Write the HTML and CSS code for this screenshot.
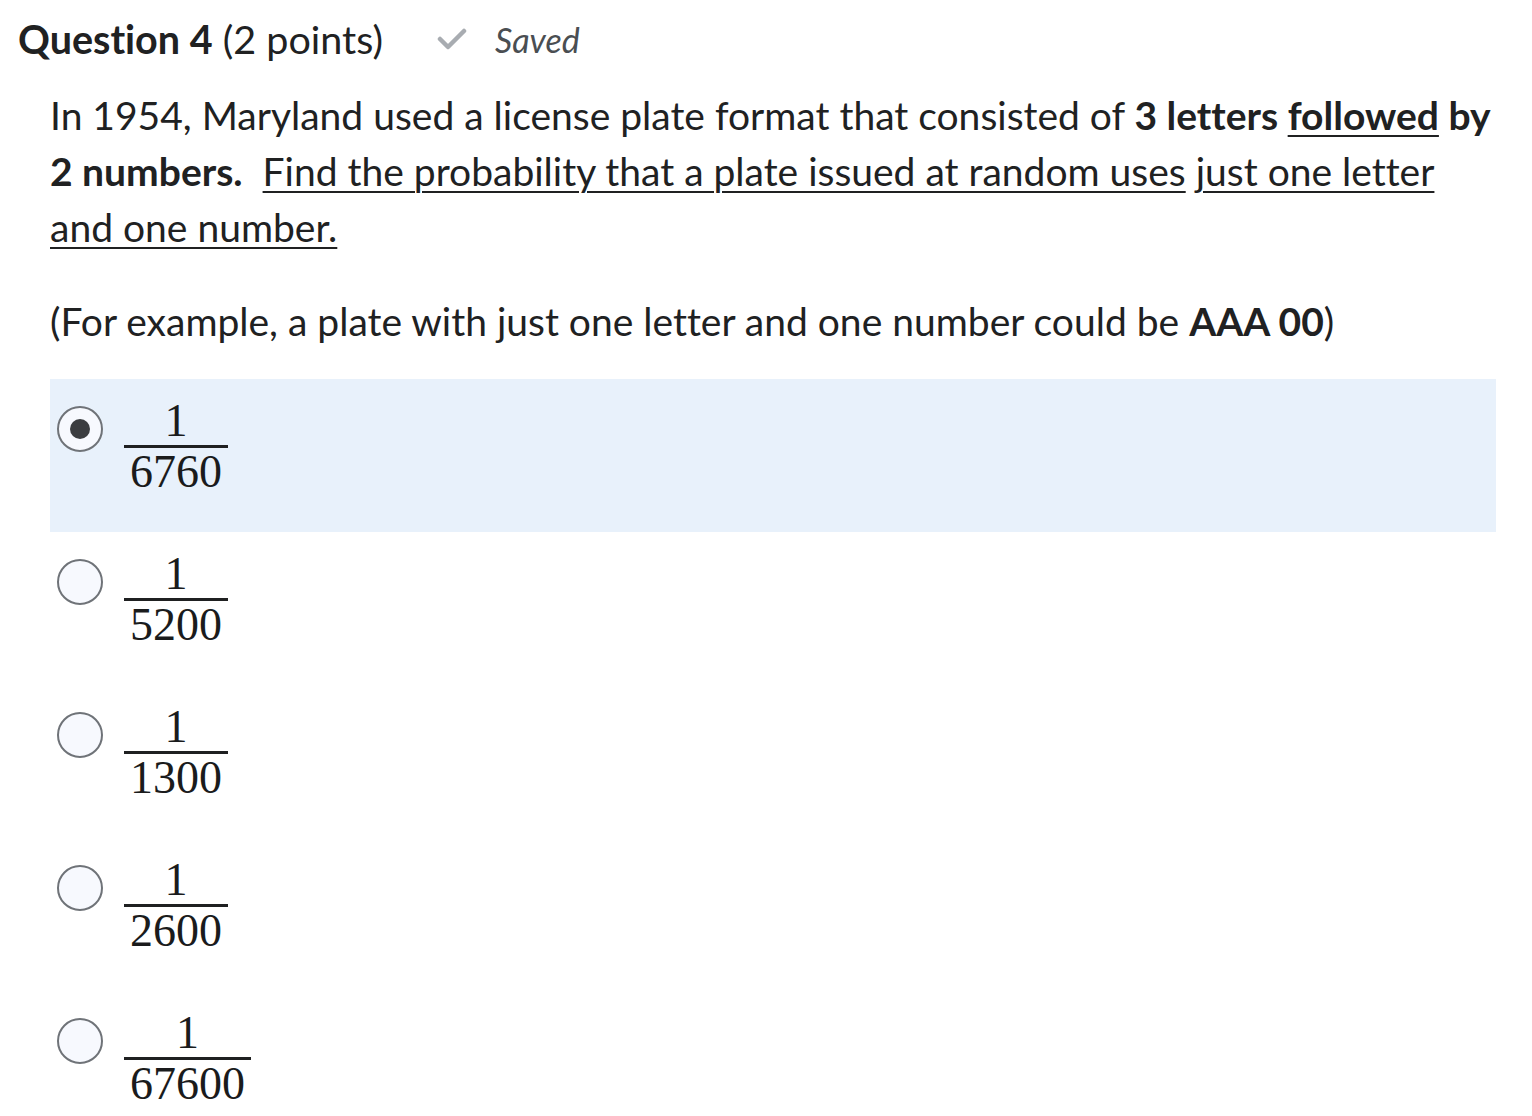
FILE: index.html
```html
<!DOCTYPE html>
<html lang="en">
<head>
    <meta charset="UTF-8">
    <title>Question 4</title>
    <link rel="stylesheet" href="styles.css">
</head>
<body>
    <div class="question">
        <div class="header">
            <h2 class="title"><b>Question 4</b> (2 points)</h2>
            <div class="saved">
                <svg class="check" width="30" height="22" viewBox="0 0 30 22">
                    <path d="M3 11 L11 19 L27 3" fill="none" stroke="#a8acb1" stroke-width="4.5" stroke-linecap="round" stroke-linejoin="round"/>
                </svg>
                <span>Saved</span>
            </div>
        </div>
        <div class="body">
            <p>In 1954, Maryland used a license plate format that consisted of <b>3 letters <u>followed</u> by 2 numbers.</b>&nbsp; <u>Find the probability that a plate issued at random uses</u> <u>just one letter and one number.</u></p>
            <p>(For example, a plate with just one letter and one number could be <b>AAA 00</b>)</p>

            <div class="options">
                <label class="option selected">
                    <span class="radio checked"></span>
                    <span class="frac"><span class="num">1</span><span class="den">6760</span></span>
                </label>
                <label class="option">
                    <span class="radio"></span>
                    <span class="frac"><span class="num">1</span><span class="den">5200</span></span>
                </label>
                <label class="option">
                    <span class="radio"></span>
                    <span class="frac"><span class="num">1</span><span class="den">1300</span></span>
                </label>
                <label class="option">
                    <span class="radio"></span>
                    <span class="frac"><span class="num">1</span><span class="den">2600</span></span>
                </label>
                <label class="option">
                    <span class="radio"></span>
                    <span class="frac"><span class="num">1</span><span class="den">67600</span></span>
                </label>
            </div>
        </div>
    </div>
</body>
</html>
```

FILE: styles.css
```css
body{
    margin: 0;
    background: #fff;
    font-family: Lato, "Open Sans", sans-serif;
    font-variant-ligatures: no-common-ligatures;
    color: #202122;
}
.question{
    padding: 13px 36px 0 18px;
}
.header{
    display: flex;
    align-items: center;
}
.title{
    margin: 0;
    font-size: 39.5px;
    font-weight: normal;
    line-height: 52px;
}
.title b{
    font-weight: bold;
}
.saved{
    display: flex;
    align-items: center;
    margin-left: 54px;
    color: #4a4e52;
    font-size: 34px;
    font-style: italic;
}
.check{
    margin-right: 28px;
}
.body{
    padding-left: 32px;
}
.body p{
    margin: 22px 0 0 0;
    font-size: 39px;
    line-height: 56px;
}
.body p + p{
    margin-top: 38px;
}
.body u{
    text-decoration-thickness: 2px;
    text-underline-offset: 5px;
}
.options{
    margin-top: 30px;
}
.option{
    display: flex;
    align-items: flex-start;
    height: 153px;
    padding-left: 7px;
}
.option.selected{
    background: #e8f1fb;
}
.radio{
    box-sizing: border-box;
    width: 46px;
    height: 46px;
    margin-top: 27px;
    border: 2px solid #6f7378;
    border-radius: 50%;
    background: #f7f9fe;
    display: flex;
    align-items: center;
    justify-content: center;
}
.radio.checked::after{
    content: "";
    width: 20px;
    height: 20px;
    border-radius: 50%;
    background: #3b3d40;
}
.frac{
    display: inline-flex;
    flex-direction: column;
    align-items: center;
    margin-left: 21px;
    margin-top: 18px;
    font-family: "Liberation Serif", "DejaVu Serif", serif;
    font-size: 46px;
    line-height: 48px;
    color: #1a1b1c;
}
.num{
    padding: 0 6px;
}
.den{
    padding: 0 6px;
    border-top: 3px solid #1f2021;
}
```
